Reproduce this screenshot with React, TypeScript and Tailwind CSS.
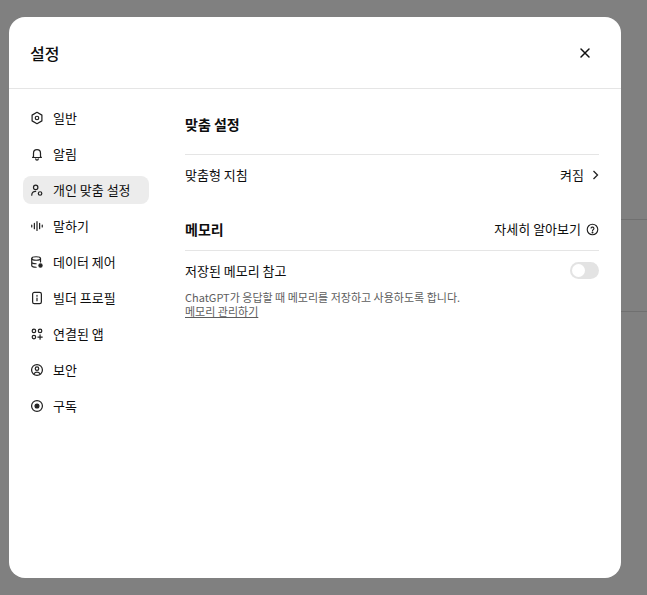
import React from "react";

const I = ({ children }: { children: React.ReactNode }) => (
  <svg width="14" height="14" viewBox="0 0 16 16" fill="none" stroke="#222" strokeWidth="1.4" strokeLinecap="round" strokeLinejoin="round">{children}</svg>
);

const items: [string, React.ReactNode][] = [
  ["일반", <I><path d="M8 1.5l5.6 3.2v6.6L8 14.5l-5.6-3.2V4.7z" /><circle cx="8" cy="8" r="2" /></I>],
  ["알림", <I><path d="M4 11V7a4 4 0 018 0v4l1 1H3z" /><path d="M6.5 13.5a1.5 1.5 0 003 0" /></I>],
  ["개인 맞춤 설정", <I><circle cx="6.5" cy="5" r="2.5" /><path d="M2 14c0-3 2-4.5 4.5-4.5" /><circle cx="11.5" cy="12" r="2" /></I>],
  ["말하기", <I><path d="M2 7v2M5 5v6M8 3v10M11 5v6M14 7v2" /></I>],
  ["데이터 제어", <I><ellipse cx="7" cy="4" rx="5" ry="2" /><path d="M2 4v8c0 1.1 2.2 2 5 2M12 4v4M2 8c0 1.1 2.2 2 5 2" /><circle cx="12" cy="12" r="1.8" fill="#222" /></I>],
  ["빌더 프로필", <I><rect x="3" y="1.5" width="10" height="13" rx="2" /><path d="M8 5v1M8 8v3" /></I>],
  ["연결된 앱", <I><circle cx="4.5" cy="4.5" r="2" /><circle cx="11.5" cy="4.5" r="2" /><circle cx="4.5" cy="11.5" r="2" /><path d="M11.5 9v5M9 11.5h5" /></I>],
  ["보안", <I><circle cx="8" cy="8" r="6.2" /><circle cx="8" cy="6.5" r="2" /><path d="M4.5 12.5c1-1.5 2-2 3.5-2s2.5.5 3.5 2" /></I>],
  ["구독", <I><circle cx="8" cy="8" r="6.2" /><circle cx="8" cy="8" r="2.2" fill="#222" /></I>],
];

export default function App() {
  return (
    <div className="relative w-[647px] h-[595px] bg-[#808080] overflow-hidden" style={{ fontFamily: '"Noto Sans CJK KR", "Noto Sans", sans-serif' }}>
      <div className="absolute left-[600px] right-0 top-[219px] h-px bg-[#707070]" />
      <div className="absolute left-[600px] right-0 top-[311px] h-px bg-[#707070]" />
      <div className="absolute left-[9px] top-[17px] w-[612px] h-[561px] bg-white rounded-2xl flex flex-col text-[#0d0d0d]">
        <div className="h-[72px] border-b border-[#e5e5e5] flex items-center justify-between pl-[21px] pr-[30px]">
          <span className="text-[16px] font-medium">설정</span>
          <svg width="12" height="12" viewBox="0 0 12 12" stroke="#111" strokeWidth="1.5" strokeLinecap="round"><path d="M2 2l8 8M10 2l-8 8" /></svg>
        </div>
        <div className="flex flex-1">
          <div className="w-[162px] pl-[14px] pt-[15px] flex flex-col gap-[8px]">
            {items.map(([t, ic], i) => (
              <div key={t} className={`h-[28px] w-[126px] flex items-center gap-[9px] pl-[7px] rounded-lg text-[13px] ${i === 2 ? "bg-[#ececec]" : ""}`}>
                {ic}<span>{t}</span>
              </div>
            ))}
          </div>
          <div className="w-[414px] ml-[14px] pt-[25px] text-[13px]">
            <div className="font-bold text-[14px] h-[20px] flex items-center">맞춤 설정</div>
            <div className="mt-[20px] border-t border-[#e5e5e5] h-[40px] flex items-center justify-between">
              <span>맞춤형 지침</span>
              <span className="flex items-center gap-[8px]">켜짐<svg width="7" height="10" viewBox="0 0 7 10" fill="none" stroke="#222" strokeWidth="1.3"><path d="M1.5 1l4 4-4 4" /></svg></span>
            </div>
            <div className="mt-[25px] h-[20px] flex items-center justify-between">
              <span className="font-bold text-[14px]">메모리</span>
              <span className="flex items-center gap-[5px]">자세히 알아보기
                <svg width="13" height="13" viewBox="0 0 16 16" fill="none" stroke="#222" strokeWidth="1.4" strokeLinecap="round"><circle cx="8" cy="8" r="6.5" /><path d="M6.2 6.2a1.9 1.9 0 013.6.6c0 1.3-1.8 1.5-1.8 2.6" /><circle cx="8" cy="11.8" r=".5" fill="#222" /></svg>
              </span>
            </div>
            <div className="mt-[11px] border-t border-[#e5e5e5] pt-[10px] flex items-center justify-between">
              <span>저장된 메모리 참고</span>
              <div className="w-[29px] h-[17px] rounded-full bg-[#e3e3e3] p-[2px]"><div className="w-[13px] h-[13px] rounded-full bg-white" /></div>
            </div>
            <div className="mt-[9px] text-[11px] text-[#5d5d5d] leading-[14px]">ChatGPT가 응답할 때 메모리를 저장하고 사용하도록 합니다.</div>
            <div className="text-[11px] text-[#5d5d5d] leading-[14px] underline">메모리 관리하기</div>
          </div>
        </div>
      </div>
    </div>
  );
}
